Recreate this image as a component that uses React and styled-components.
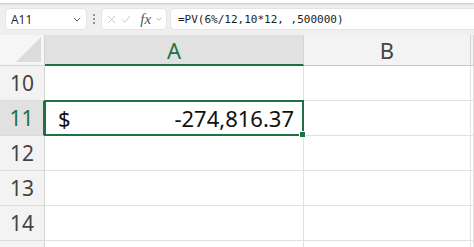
import React from 'react';
import styled, { createGlobalStyle } from 'styled-components';

const GlobalStyle = createGlobalStyle`
  html, body {
    margin: 0;
    padding: 0;
    background: #ffffff;
    overflow: hidden;
  }
  body {
    font-family: 'Open Sans', 'Noto Sans', sans-serif;
  }
`;

const Page = styled.div`
  width: 474px;
  height: 247px;
  overflow: hidden;
  background: #ffffff;
`;

const TopStrip = styled.div`
  height: 3px;
  background: #ffffff;
  box-shadow: 0 1px 2px rgba(0, 0, 0, 0.18);
  position: relative;
  z-index: 1;
`;

const Toolbar = styled.div`
  display: flex;
  align-items: center;
  height: 32px;
  padding: 0 0 0 6px;
  background: #efefef;
`;

const Box = styled.div`
  display: flex;
  align-items: center;
  height: 20px;
  background: #ffffff;
  border-radius: 4px;
  box-shadow: 0 0 0 1px #e4e4e4;
`;

const NameBox = styled(Box)`
  width: 80px;
  justify-content: space-between;
  padding: 0 5px 0 5px;
  box-sizing: border-box;
  font-size: 12px;
  color: #222;
`;

const Dots = styled.div`
  display: flex;
  flex-direction: column;
  gap: 2px;
  margin: 0 7px 0 7px;
  & > span {
    width: 2px;
    height: 2px;
    border-radius: 1px;
    background: #777;
  }
`;

const FuncBox = styled(Box)`
  width: 64px;
  padding: 0 4px 0 5px;
  box-sizing: border-box;
  gap: 5px;
`;

const Fx = styled.span`
  font-family: 'Liberation Serif', serif;
  font-style: italic;
  font-size: 15px;
  color: #555;
  margin-left: 4px;
`;

const FormulaBox = styled(Box)`
  flex: 1;
  margin-left: 5px;
  padding-left: 7px;
  border-radius: 4px 0 0 4px;
  font-family: 'DejaVu Sans Mono', 'Liberation Mono', monospace;
  font-size: 11px;
  color: #222;
`;

const Grid = styled.div`
  display: grid;
  grid-template-columns: 45px 259px 167px 1fr;
  grid-template-rows: 31px repeat(6, 35px);
  background: #ffffff;
`;

const Corner = styled.div`
  position: relative;
  background: #f6f6f6;
  border-right: 1px solid #d4d4d4;
  border-bottom: 1px solid #d4d4d4;
  overflow: hidden;
  &::after {
    content: '';
    position: absolute;
    right: 3px;
    bottom: 3px;
    width: 0;
    height: 0;
    border-left: 25px solid transparent;
    border-bottom: 25px solid #dcdcdc;
  }
`;

const ColHead = styled.div`
  display: flex;
  align-items: center;
  justify-content: center;
  background: ${p => (p.$active ? '#e1e1e1' : '#f3f3f3')};
  color: ${p => (p.$active ? '#1e7145' : '#444')};
  border-right: 1px solid #d4d4d4;
  border-bottom: ${p => (p.$active ? '2px solid #1e7145' : '1px solid #c8c8c8')};
  font-size: 22px;
  font-family: 'Noto Sans', sans-serif;
  box-sizing: border-box;
`;

const RowHead = styled.div`
  display: flex;
  align-items: center;
  justify-content: center;
  background: ${p => (p.$active ? '#e1e1e1' : '#f3f3f3')};
  color: ${p => (p.$active ? '#1e7145' : '#444')};
  border-right: ${p => (p.$active ? '2px solid #1e7145' : '1px solid #d4d4d4')};
  border-bottom: 1px solid #dcdcdc;
  font-size: 21px;
  font-family: 'Noto Sans', sans-serif;
  box-sizing: border-box;
`;

const Cell = styled.div`
  border-right: 1px solid #e1e1e1;
  border-bottom: 1px solid #e1e1e1;
  box-sizing: border-box;
`;

const ActiveCell = styled.div`
  position: relative;
  display: flex;
  align-items: center;
  justify-content: space-between;
  margin: -1px 0 0 -1px;
  padding: 0 8px 0 12px;
  border: 2px solid #1e7145;
  font-family: 'Noto Sans', sans-serif;
  font-size: 22px;
  color: #111;
  &::after {
    content: '';
    position: absolute;
    right: -4px;
    bottom: -4px;
    width: 5px;
    height: 5px;
    background: #1e7145;
    border: 1px solid #ffffff;
  }
`;

const Chevron = ({ size = 8, color = '#555' }) => (
  <svg width={size} height={size * 0.6} viewBox="0 0 10 6">
    <path d="M1 1l4 4 4-4" fill="none" stroke={color} strokeWidth="1.2" />
  </svg>
);

const rows = [10, 11, 12, 13, 14, 15];

const App = () => (
  <Page>
    <GlobalStyle />
    <TopStrip />
    <Toolbar>
      <NameBox>
        <span>A11</span>
        <Chevron />
      </NameBox>
      <Dots>
        <span />
        <span />
        <span />
      </Dots>
      <FuncBox>
        <svg width="11" height="11" viewBox="0 0 11 11">
          <path d="M1 1l9 9M10 1l-9 9" stroke="#c4c4c4" strokeWidth="1.1" />
        </svg>
        <svg width="12" height="10" viewBox="0 0 12 10">
          <path d="M1 5.5l3.5 3.5L11 1" fill="none" stroke="#c4c4c4" strokeWidth="1.1" />
        </svg>
        <Fx>fx</Fx>
        <Chevron size={7} color="#999" />
      </FuncBox>
      <FormulaBox>=PV(6%/12,10*12, ,500000)</FormulaBox>
    </Toolbar>
    <Grid>
      <Corner />
      <ColHead $active>A</ColHead>
      <ColHead>B</ColHead>
      <ColHead />
      {rows.map(r => (
        <React.Fragment key={r}>
          <RowHead $active={r === 11}>{r < 15 ? r : ''}</RowHead>
          {r === 11 ? (
            <ActiveCell>
              <span>$</span>
              <span>-274,816.37</span>
            </ActiveCell>
          ) : (
            <Cell />
          )}
          <Cell />
          <Cell />
        </React.Fragment>
      ))}
    </Grid>
  </Page>
);

export default App;
